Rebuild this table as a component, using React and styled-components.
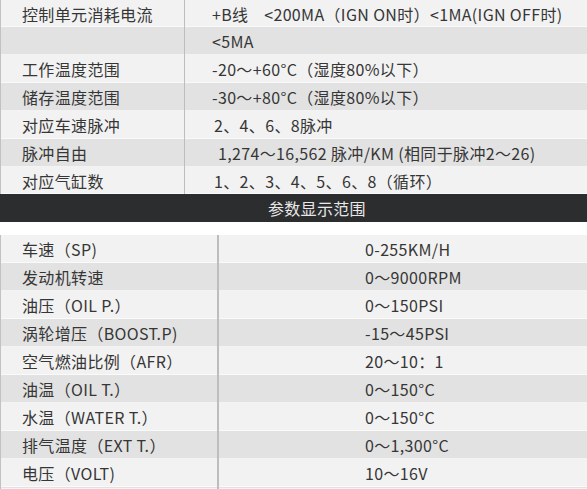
import React from "react";
import styled, { createGlobalStyle } from "styled-components";

const Global = createGlobalStyle`
  html, body { margin: 0; padding: 0; background: #ffffff; }
  body {
    font-family: "Noto Sans CJK SC", "Noto Sans", sans-serif;
    color: #363636;
    overflow: hidden;
  }
`;

const Page = styled.div`
  width: 587px;
  display: flex;
  flex-direction: column;
  background: #ffffff;
  & > * { flex-shrink: 0; }
`;

const Table = styled.div`
  display: flex;
  flex-direction: column;
  border-left: 1px solid #c2c2c2;
`;

const Row = styled.div`
  display: grid;
  grid-template-columns: ${(p) => p.$labelWidth}px 1fr;
  height: ${(p) => p.$height}px;
  flex-shrink: 0;
  overflow: hidden;
  background: ${(p) => (p.$shade ? "#e2e2e2" : "#f2f2f2")};
  box-shadow: inset 0 -1px 0 rgba(255, 255, 255, 0.6);
`;

const Label = styled.div`
  display: flex;
  align-items: center;
  padding-left: 21px;
  font-size: 16px;
  letter-spacing: 0.35px;
  white-space: nowrap;
  border-right: ${(p) => p.$rule}px solid #bdbdbd;
`;

const Value = styled.div`
  display: flex;
  align-items: center;
  padding-left: ${(p) => p.$indent}px;
  font-size: 16px;
  letter-spacing: 0.35px;
  white-space: pre;
`;

const Banner = styled.div`
  height: 28px;
  background: #2c2d2f;
  color: #e8e8e8;
  font-size: 16px;
  display: flex;
  align-items: center;
  padding-left: 268px;
  letter-spacing: 0.3px;
`;

const Gap = styled.div`
  height: 13px;
  background: #ffffff;
`;

const specs = [
  ["控制单元消耗电流", "+B线    <200MA（IGN ON时）<1MA(IGN OFF时)", 27, 0],
  ["", "<5MA", 28, 0],
  ["工作温度范围", "-20～+60°C（湿度80%以下）", 28, 0],
  ["储存温度范围", "-30～+80°C（湿度80%以下）", 28, 0],
  ["对应车速脉冲", "2、4、6、8脉冲", 28, 2],
  ["脉冲自由", "1,274～16,562 脉冲/KM (相同于脉冲2～26)", 28, 6],
  ["对应气缸数", "1、2、3、4、5、6、8（循环）", 27, 2],
];

const ranges = [
  ["车速（SP)", "0-255KM/H", 28],
  ["发动机转速", "0～9000RPM", 28],
  ["油压（OIL P.）", "0～150PSI", 28],
  ["涡轮增压（BOOST.P)", "-15～45PSI", 28],
  ["空气燃油比例（AFR）", "20～10：1", 28],
  ["油温（OIL T.）", "0～150°C", 28],
  ["水温（WATER T.）", "0～150°C", 28],
  ["排气温度（EXT T.）", "0～1,300°C", 28],
  ["电压（VOLT)", "10～16V", 28],
  ["", "", 2],
];

export default function App() {
  return (
    <>
      <Global />
      <Page>
        <Table>
          {specs.map(([label, value, h, extra], i) => (
            <Row key={i} $labelWidth={184} $height={h} $shade={i % 2 === 1}>
              <Label $rule={1}>{label}</Label>
              <Value $indent={27 + extra}>{value}</Value>
            </Row>
          ))}
        </Table>
        <Banner>参数显示范围</Banner>
        <Gap />
        <Table>
          {ranges.map(([label, value, h], i) => (
            <Row key={i} $labelWidth={218} $height={h} $shade={i % 2 === 1}>
              <Label $rule={2}>{label}</Label>
              <Value $indent={146}>{value}</Value>
            </Row>
          ))}
        </Table>
      </Page>
    </>
  );
}
